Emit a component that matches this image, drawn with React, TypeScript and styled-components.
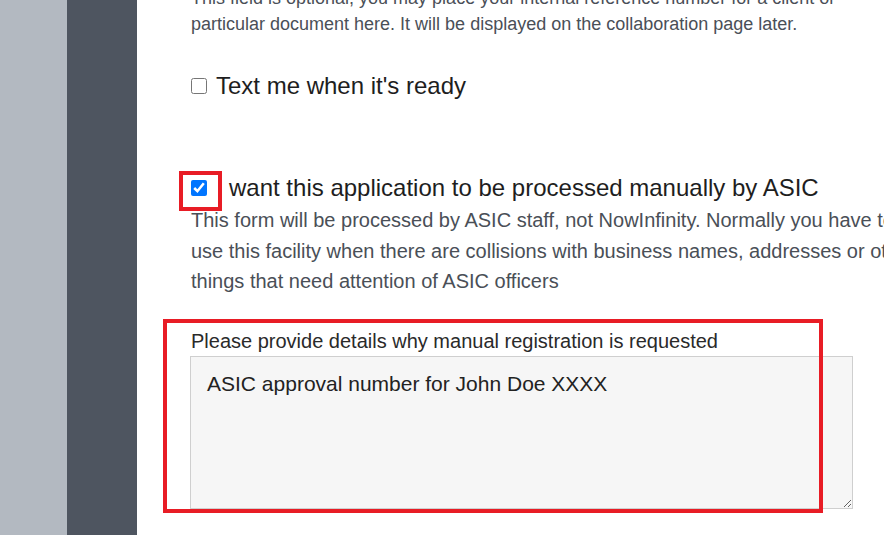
import styled, { createGlobalStyle } from 'styled-components';

const GlobalStyle = createGlobalStyle`
  html, body {
    margin: 0;
    padding: 0;
    overflow: hidden;
    background: #ffffff;
    font-family: "Liberation Sans", Arial, sans-serif;
  }
`;

const Page = styled.div`
  display: flex;
  flex-flow: row nowrap;
  height: 535px;
  width: 884px;
  overflow: hidden;
`;

const Rail = styled.div`
  width: 67px;
  flex-shrink: 0;
  background: #b3b9c1;
`;

const SideNav = styled.div`
  width: 70px;
  flex-shrink: 0;
  background: #4e5560;
`;

const Main = styled.main`
  flex-grow: 1;
  overflow: hidden;
  padding-left: 54px;
`;

const Form = styled.div`
  width: 740px;
  margin-top: -15px;
  display: flex;
  flex-flow: column nowrap;
`;

const Hint = styled.p<{ $size: number; $lh: number; $width: number; $top?: number }>`
  margin: ${(p) => p.$top ?? 0}px 0 0;
  width: ${(p) => p.$width}px;
  font-size: ${(p) => p.$size}px;
  line-height: ${(p) => p.$lh}px;
  color: #4a4f57;
`;

const CheckRow = styled.label<{ $top: number }>`
  display: flex;
  flex-flow: row nowrap;
  align-items: center;
  margin-top: ${(p) => p.$top}px;
  font-size: 24px;
  line-height: 30px;
  color: #1e1e1e;
  cursor: pointer;
`;

const CheckWrap = styled.span<{ $gap: number }>`
  position: relative;
  display: inline-flex;
  margin-right: ${(p) => p.$gap}px;
`;

const Box = styled.input`
  width: 16px;
  height: 16px;
  margin: 0;
  accent-color: #0075ff;
`;

const Highlight = styled.span`
  position: absolute;
  border: 4px solid #e81c25;
  pointer-events: none;
`;

const CheckHighlight = styled(Highlight)`
  left: -12px;
  top: -9px;
  width: 35px;
  height: 32px;
`;

const FieldGroup = styled.div`
  position: relative;
  margin-top: 33px;
  display: flex;
  flex-flow: column nowrap;
`;

const FieldHighlight = styled(Highlight)`
  left: -28px;
  top: -11px;
  width: 652px;
  height: 186px;
`;

const FieldLabel = styled.div`
  font-size: 20px;
  line-height: 22px;
  color: #2a2a2a;
  margin-bottom: 4px;
`;

const Details = styled.textarea`
  width: 663px;
  height: 153px;
  margin-left: -1px;
  box-sizing: border-box;
  padding: 14px 16px;
  border: 1px solid #cfcfcf;
  background: #f6f6f6;
  font-family: "Liberation Sans", Arial, sans-serif;
  font-size: 21px;
  line-height: 26px;
  color: #222;
  resize: vertical;
  outline: none;
`;

export default function App() {
  return (
    <>
      <GlobalStyle />
      <Page>
        <Rail />
        <SideNav />
        <Main>
          <Form>
            <Hint $size={18} $lh={26} $width={718}>
              This field is optional, you may place your internal reference number for a client or
              particular document here. It will be displayed on the collaboration page later.
            </Hint>

            <CheckRow $top={34}>
              <CheckWrap $gap={9}>
                <Box type="checkbox" />
              </CheckWrap>
              Text me when it's ready
            </CheckRow>

            <CheckRow $top={72}>
              <CheckWrap $gap={22}>
                <Box type="checkbox" defaultChecked />
                <CheckHighlight />
              </CheckWrap>
              want this application to be processed manually by ASIC
            </CheckRow>

            <Hint $size={20} $lh={30.5} $width={728} $top={2}>
              This form will be processed by ASIC staff, not NowInfinity. Normally you have to
              use this facility when there are collisions with business names, addresses or other
              things that need attention of ASIC officers
            </Hint>

            <FieldGroup>
              <FieldLabel>Please provide details why manual registration is requested</FieldLabel>
              <Details defaultValue="ASIC approval number for John Doe XXXX" />
              <FieldHighlight />
            </FieldGroup>
          </Form>
        </Main>
      </Page>
    </>
  );
}
